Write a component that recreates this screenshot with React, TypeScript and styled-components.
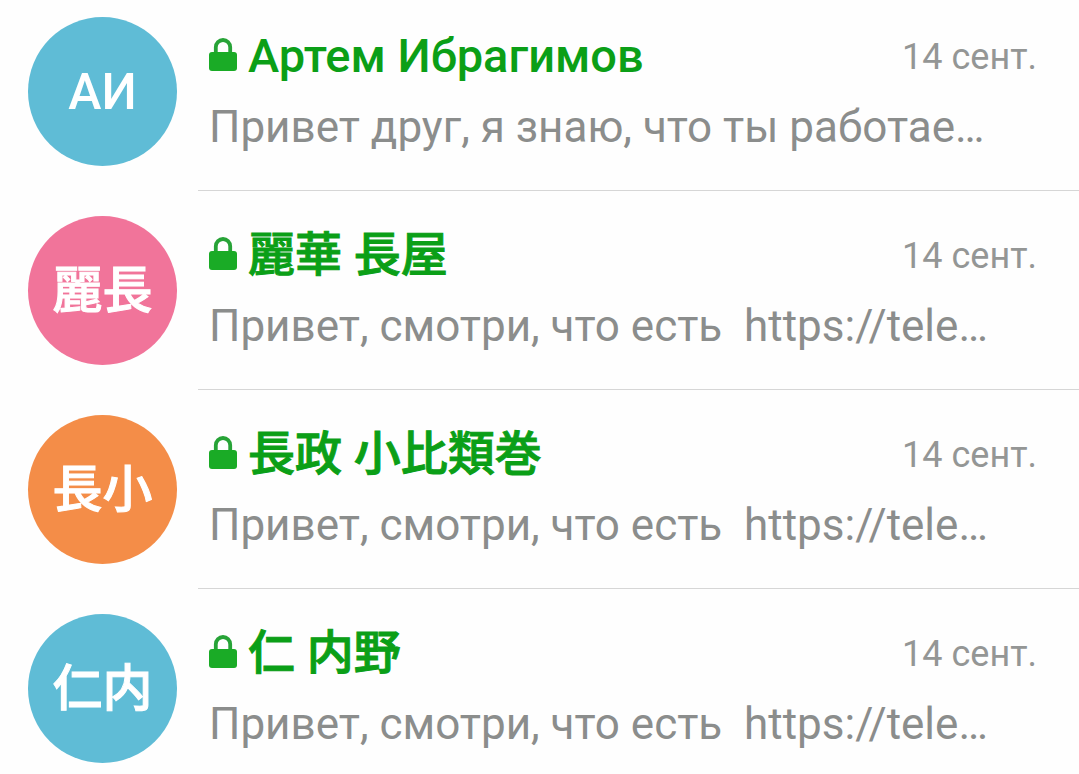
import React from 'react';
import styled, { createGlobalStyle } from 'styled-components';

const GlobalStyle = createGlobalStyle`
  * { box-sizing: border-box; }
  body { margin: 0; background: #fefefe; font-family: Roboto, "Noto Sans CJK JP", sans-serif; }
`;

const ChatList = styled.ul`
  list-style: none;
  margin: 0;
  padding: 0;
  height: 100vh;
  overflow: hidden;
`;

const ChatRow = styled.li`
  display: flex;
  height: 199px;
  padding-left: 28px;
`;

const Avatar = styled.div<{ $color: string; $stroke: number }>`
  flex: none;
  display: flex;
  align-items: center;
  justify-content: center;
  width: 149px;
  height: 149px;
  margin-top: 17px;
  margin-right: 21px;
  border-radius: 50%;
  background: ${(p) => p.$color};
  color: #fff;
  font-size: 50px;
  line-height: 60px;
  font-weight: 500;
  -webkit-text-stroke: ${(p) => p.$stroke}px currentColor;
`;

const Content = styled.div`
  flex: 1;
  min-width: 0;
  height: 191px;
  padding: 28px 42px 0 11px;
  border-bottom: 1px solid #d6d6d6;
`;

const Heading = styled.div`
  display: flex;
  align-items: center;
  height: 56px;
`;

const LockIcon = styled.svg`
  flex: none;
  width: 28px;
  height: 34px;
  margin-right: 11px;
  margin-bottom: 2px;
`;

const Name = styled.h2<{ $stroke: number }>`
  flex: 1;
  margin: 0;
  color: #0b9f17;
  font-size: 47px;
  line-height: 56px;
  font-weight: 500;
  white-space: nowrap;
  -webkit-text-stroke: ${(p) => p.$stroke}px currentColor;
`;

const Time = styled.time`
  padding-top: 2px;
  color: #949695;
  font-size: 36px;
  line-height: 56px;
`;

const Preview = styled.p`
  margin: 15px 50px 0 0;
  color: #8b8d8c;
  font-size: 44px;
  line-height: 56px;
  white-space: pre;
`;

// Han glyphs get a thin outline so they look as heavy as the medium-weight Cyrillic.
const chats = [
  { initials: 'АИ', color: '#5fbcd6', stroke: 0, name: 'Артем Ибрагимов', text: 'Привет друг, я знаю, что ты работае…' },
  { initials: '麗長', color: '#f1749a', stroke: 1, name: '麗華 長屋', text: 'Привет, смотри, что есть  https://tele…' },
  { initials: '長小', color: '#f48d48', stroke: 1, name: '長政 小比類巻', text: 'Привет, смотри, что есть  https://tele…' },
  { initials: '仁内', color: '#5fbcd6', stroke: 1, name: '仁 内野', text: 'Привет, смотри, что есть  https://tele…' },
];

function Lock() {
  return (
    <LockIcon viewBox="0 0 28 34" aria-hidden="true">
      <path d="M6.800 17V9.200a7.200 7.200 0 0 1 14.400 0V17" fill="none" stroke="#27a337" strokeWidth="3.800" />
      <rect x="0" y="14" width="28" height="19" rx="3" fill="#1aab26" />
    </LockIcon>
  );
}

export default function App() {
  return (
    <>
      <GlobalStyle />
      <ChatList>
        {chats.map((chat) => (
          <ChatRow key={chat.name}>
            <Avatar $color={chat.color} $stroke={chat.stroke}>{chat.initials}</Avatar>
            <Content>
              <Heading>
                <Lock />
                <Name $stroke={chat.stroke}>{chat.name}</Name>
                <Time>14 сент.</Time>
              </Heading>
              <Preview>{chat.text}</Preview>
            </Content>
          </ChatRow>
        ))}
      </ChatList>
    </>
  );
}
